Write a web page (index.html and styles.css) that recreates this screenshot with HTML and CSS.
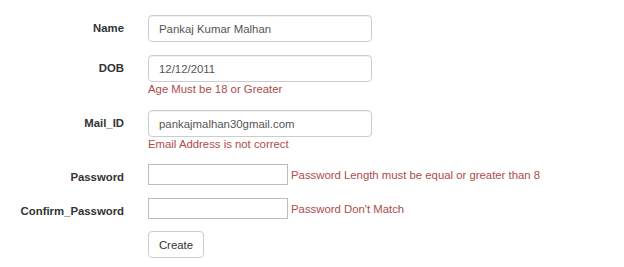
FILE: index.html
```html
<!DOCTYPE html>
<html>
<head>
<meta charset="utf-8">
<link rel="stylesheet" href="styles.css">
</head>
<body>
<form class="form">
  <div class="row">
    <label class="label">Name</label>
    <div class="field"><input class="control" type="text" value="Pankaj Kumar Malhan"></div>
  </div>
  <div class="row row-gap">
    <label class="label">DOB</label>
    <div class="field">
      <input class="control" type="text" value="12/12/2011">
      <div class="error">Age Must be 18 or Greater</div>
    </div>
  </div>
  <div class="row row-gap2">
    <label class="label">Mail_ID</label>
    <div class="field">
      <input class="control" type="text" value="pankajmalhan30gmail.com">
      <div class="error">Email Address is not correct</div>
    </div>
  </div>
  <div class="row row-gap3">
    <label class="label low">Password</label>
    <div class="field inline-field">
      <input class="plain" type="password">
      <span class="error side">Password Length must be equal or greater than 8</span>
    </div>
  </div>
  <div class="row row-gap4">
    <label class="label low">Confirm_Password</label>
    <div class="field inline-field">
      <input class="plain" type="password">
      <span class="error side">Password Don't Match</span>
    </div>
  </div>
  <div class="row row-gap5">
    <span class="label"></span>
    <div class="field"><button class="btn" type="button">Create</button></div>
  </div>
</form>
</body>
</html>
```
FILE: styles.css
```css
html, body {
  margin: 0;
  padding: 0;
  background: #fff;
}
body {
  font-family: "Liberation Sans", Arial, sans-serif;
  color: #333;
}
.form {
  padding-top: 15px;
}
.row {
  display: flex;
  align-items: flex-start;
}
.row-gap { margin-top: 13px; }
.row-gap2 { margin-top: 14px; }
.row-gap3 { margin-top: 13px; }
.row-gap4 { margin-top: 13px; }
.row-gap5 { margin-top: 12px; }
.label {
  width: 124px;
  flex: none;
  text-align: right;
  font-weight: bold;
  font-size: 11.35px;
  line-height: 27px;
  color: #333;
}
.label.low {
  line-height: 21px;
  padding-top: 3px;
  margin-bottom: -3px;
}
.field {
  margin-left: 24px;
  display: flex;
  flex-direction: column;
}
.inline-field {
  flex-direction: row;
  align-items: center;
}
.control {
  box-sizing: border-box;
  width: 224px;
  height: 27px;
  margin: 0;
  padding: 0 10px;
  border: 1px solid #ccc;
  border-radius: 4px;
  box-shadow: inset 0 1px 1px rgba(0,0,0,0.06);
  font-family: "Liberation Sans", Arial, sans-serif;
  font-size: 11.4px;
  color: #555;
  background: #fff;
}
.plain {
  box-sizing: border-box;
  width: 140px;
  height: 21px;
  margin: 0;
  padding: 0 2px;
  border: 1px solid #bdbdbd;
  border-radius: 0;
  background: #fff;
}
.error {
  color: #ad4c4a;
  font-size: 11.35px;
  line-height: 14px;
  margin-top: 0;
}
.error.side {
  margin-top: 0;
  margin-left: 3px;
  white-space: nowrap;
}
.btn {
  box-sizing: border-box;
  width: 56px;
  height: 27px;
  margin: 0;
  padding: 0;
  border: 1px solid #ccc;
  border-radius: 4px;
  background: #fff;
  font-family: "Liberation Sans", Arial, sans-serif;
  font-size: 11.4px;
  color: #333;
}
```
